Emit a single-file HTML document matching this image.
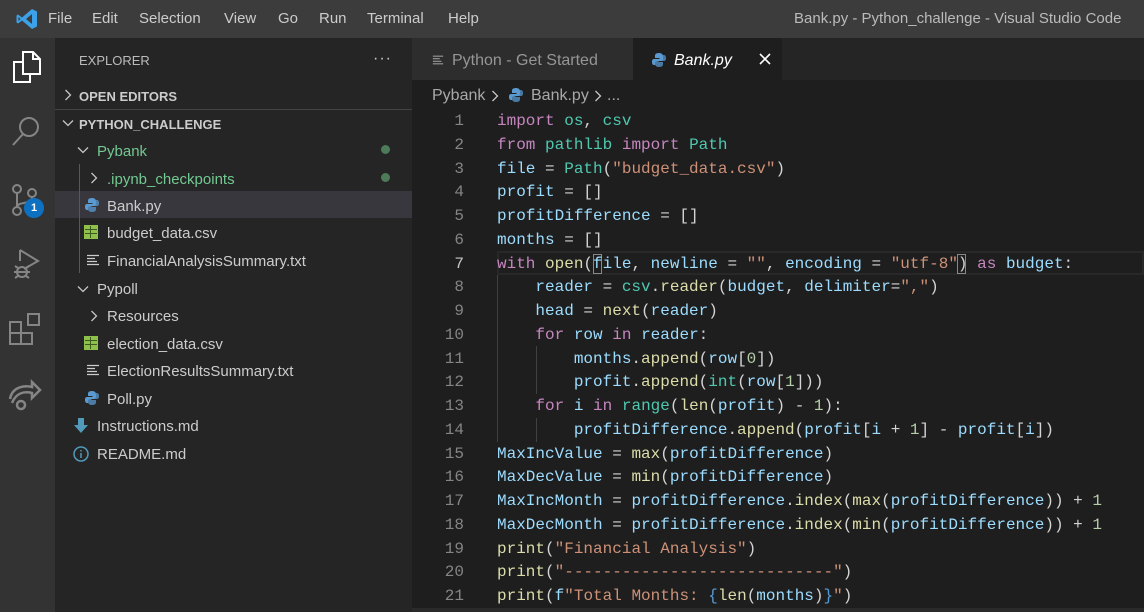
<!DOCTYPE html>
<html><head><meta charset="utf-8">
<style>
*{margin:0;padding:0;box-sizing:border-box}
body{width:1144px;height:612px;overflow:hidden;background:#1e1e1e;font-family:"Liberation Sans",sans-serif;position:relative}
.abs{position:absolute}
#title{left:0;top:0;width:1144px;height:38px;background:#3c3c3c}
.menu{top:10px;font-size:15px;color:#cccccc}
#act{left:0;top:38px;width:55px;height:574px;background:#333333}
#side{left:55px;top:38px;width:357px;height:574px;background:#252526}
.st{font-size:15px;color:#cccccc;white-space:nowrap}
.hdr{font-size:13px;font-weight:bold;color:#cccccc}
#tabs{left:412px;top:38px;width:732px;height:42px;background:#252526}
.code{font-family:"Liberation Mono",monospace;font-size:16px;white-space:pre;color:#d4d4d4}
.ln{font-family:"Liberation Mono",monospace;font-size:16px;color:#858585;width:52px;text-align:right;left:412px}
.k{color:#c586c0}.v{color:#9cdcfe}.f{color:#dcdcaa}.c{color:#4ec9b0}.s{color:#ce9178}.n{color:#b5cea8}
.csv{width:14px;height:14px;background:#8dc149;border:1px solid #8dc149;background-image:linear-gradient(90deg,transparent 5px,#3d5a1e 5px,#3d5a1e 6px,transparent 6px),linear-gradient(transparent 3px,#3d5a1e 3px,#3d5a1e 4px,transparent 4px,transparent 7px,#3d5a1e 7px,#3d5a1e 8px,transparent 8px)}
</style></head><body>
<svg width="0" height="0" style="position:absolute"><defs>
<symbol id="cr" viewBox="0 0 16 16"><path d="M5.5 3 L10.5 8 L5.5 13" fill="none" stroke="#c5c5c5" stroke-width="1.3"/></symbol>
<symbol id="cd" viewBox="0 0 16 16"><path d="M3 5.5 L8 10.5 L13 5.5" fill="none" stroke="#c5c5c5" stroke-width="1.3"/></symbol>
<symbol id="py" viewBox="0 0 14 14"><path d="M7 0 C3 0 3 2 3 3 V5 H7.5 V6 H2 C0 6 0 8 0 9 C0 11 1 12 2 12 H3 V10 C3 9 4 8 5 8 H9 C10 8 11 7 11 6 V3 C11 1 9 0 7 0Z" fill="#5a9ad0"/><path d="M7 14 C11 14 11 12 11 11 V9 H6.5 V8 H12 C14 8 14 6 14 5 C14 3 13 2 12 2 H11 V4 C11 5 10 6 9 6 H5 C4 6 3 7 3 8 V11 C3 13 5 14 7 14Z" fill="#5a9ad0" opacity=".75"/></symbol>
<symbol id="tx" viewBox="0 0 14 14"><path d="M1 2.5 H13 M1 5.5 H9 M1 8.5 H11 M1 11.5 H13" stroke="#cccccc" stroke-width="1.2"/></symbol>
</defs></svg>
<div id="title" class="abs"></div>
<svg class="abs" style="left:16px;top:8px" width="22" height="22" viewBox="0 0 22 22"><path d="M16 1 L21 3.5 V18.5 L16 21 L6 12.5 L2 15.5 L0.5 14.5 V7.5 L2 6.5 L6 9.5 Z M16 6 L10 11 L16 16 Z M2.5 9 V13 L4.5 11 Z" fill="#3ca1e8" fill-rule="evenodd"/></svg>
<div class="abs menu" style="left:48px">File</div>
<div class="abs menu" style="left:92px">Edit</div>
<div class="abs menu" style="left:139px">Selection</div>
<div class="abs menu" style="left:224px">View</div>
<div class="abs menu" style="left:278px">Go</div>
<div class="abs menu" style="left:319px">Run</div>
<div class="abs menu" style="left:367px">Terminal</div>
<div class="abs menu" style="left:448px">Help</div>
<div class="abs menu" style="left:794px;color:#bbbbbb">Bank.py - Python_challenge - Visual Studio Code</div>

<div id="act" class="abs"></div>
<svg class="abs" style="left:10px;top:50px" width="32" height="34" viewBox="0 0 32 34" fill="none" stroke="#ffffff" stroke-width="2"><path d="M13 2 H23 L30 9 V24 H13 Z"/><path d="M23 2 V9 H30"/><path d="M13 12 H4 V32 H20 V24"/></svg>
<svg class="abs" style="left:10px;top:115px" width="32" height="34" viewBox="0 0 32 34" fill="none" stroke="#858585" stroke-width="2"><circle cx="19" cy="12" r="9"/><path d="M13 19 L3 30"/></svg>
<svg class="abs" style="left:10px;top:183px" width="32" height="34" viewBox="0 0 32 34" fill="none" stroke="#858585" stroke-width="2"><circle cx="7" cy="6" r="4"/><circle cx="22" cy="10" r="4"/><circle cx="7" cy="28" r="4"/><path d="M7 10 V24 M22 14 C22 22 8 18 7 24"/></svg>
<div class="abs" style="left:24px;top:198px;width:20px;height:20px;border-radius:10px;background:#0e70c0;color:#fff;font-size:11px;font-weight:bold;text-align:center;line-height:20px">1</div>
<svg class="abs" style="left:8px;top:247px" width="34" height="34" viewBox="0 0 34 34" fill="none" stroke="#858585" stroke-width="2"><path d="M12 3 L30 14 L16 22"/><path d="M12 3 V14"/><ellipse cx="14" cy="25" rx="5" ry="5"/><path d="M6 25 H22 M7 19 L10 21 M21 19 L18 21 M7 31 L10 29 M21 31 L18 29"/></svg>
<svg class="abs" style="left:8px;top:312px" width="34" height="34" viewBox="0 0 34 34" fill="none" stroke="#858585" stroke-width="2"><rect x="2" y="10" width="11" height="11"/><rect x="2" y="21" width="11" height="11"/><rect x="13" y="21" width="11" height="11"/><rect x="20" y="2" width="11" height="11"/></svg>
<svg class="abs" style="left:8px;top:377px" width="34" height="34" viewBox="0 0 34 34" fill="none" stroke="#858585" stroke-width="2.5"><path d="M2 22 C4 10 16 8 24 10 V5 L32 13 L24 21 V16 C16 14 8 16 4 26"/><circle cx="13" cy="28" r="4"/></svg>

<div id="side" class="abs"></div>
<div class="abs" style="left:79px;top:53px;font-size:13px;color:#bbbbbb">EXPLORER</div>
<div class="abs" style="left:373px;top:50px;font-size:16px;color:#cccccc;letter-spacing:1px">···</div>
<svg class="abs" style="left:60px;top:87px" width="16" height="16"><use href="#cr"/></svg>
<div class="abs hdr" style="left:79px;top:89px">OPEN EDITORS</div>
<div class="abs" style="left:55px;top:109px;width:357px;height:1px;background:#444"></div>
<svg class="abs" style="left:60px;top:115px" width="16" height="16"><use href="#cd"/></svg>
<div class="abs hdr" style="left:79px;top:117px">PYTHON_CHALLENGE</div>
<div class="abs" style="left:55px;top:191px;width:357px;height:27px;background:#37373d"></div>
<div class="abs" style="left:79px;top:164px;width:1px;height:109px;background:#585858"></div>

<svg class="abs" style="left:75px;top:142px" width="16" height="16"><use href="#cd"/></svg>
<div class="abs st" style="left:97px;top:143px;color:#73c991">Pybank</div>
<div class="abs" style="left:381px;top:145px;width:9px;height:9px;border-radius:5px;background:#4d7a58"></div>
<svg class="abs" style="left:86px;top:170px" width="16" height="16"><use href="#cr"/></svg>
<div class="abs st" style="left:107px;top:171px;color:#73c991">.ipynb_checkpoints</div>
<div class="abs" style="left:381px;top:173px;width:9px;height:9px;border-radius:5px;background:#4d7a58"></div>

<svg class="abs" style="left:85px;top:198px" width="14" height="14"><use href="#py"/></svg>
<div class="abs st" style="left:107px;top:198px">Bank.py</div>
<div class="abs csv" style="left:84px;top:225px"></div>
<div class="abs st" style="left:107px;top:225px">budget_data.csv</div>
<svg class="abs" style="left:86px;top:253px" width="14" height="14"><use href="#tx"/></svg>
<div class="abs st" style="left:107px;top:253px">FinancialAnalysisSummary.txt</div>
<svg class="abs" style="left:75px;top:281px" width="16" height="16"><use href="#cd"/></svg>
<div class="abs st" style="left:97px;top:281px">Pypoll</div>
<svg class="abs" style="left:86px;top:308px" width="16" height="16"><use href="#cr"/></svg>
<div class="abs st" style="left:107px;top:308px">Resources</div>
<div class="abs csv" style="left:84px;top:336px"></div>
<div class="abs st" style="left:107px;top:336px">election_data.csv</div>
<svg class="abs" style="left:86px;top:363px" width="14" height="14"><use href="#tx"/></svg>
<div class="abs st" style="left:107px;top:363px">ElectionResultsSummary.txt</div>
<svg class="abs" style="left:85px;top:391px" width="14" height="14"><use href="#py"/></svg>
<div class="abs st" style="left:107px;top:391px">Poll.py</div>
<svg class="abs" style="left:74px;top:418px" width="14" height="16" viewBox="0 0 14 16"><path d="M4 0 H10 V7 H14 L7 15 L0 7 H4 Z" fill="#519aba"/></svg>
<div class="abs st" style="left:97px;top:418px">Instructions.md</div>
<svg class="abs" style="left:73px;top:446px" width="16" height="16" viewBox="0 0 16 16" fill="none" stroke="#519aba" stroke-width="1.5"><circle cx="8" cy="8" r="7"/><path d="M8 7 V12 M8 4 V5.5"/></svg>
<div class="abs st" style="left:97px;top:446px">README.md</div>

<div id="tabs" class="abs"></div>
<div class="abs" style="left:412px;top:38px;width:221px;height:42px;background:#2d2d2d"></div>
<svg class="abs" style="left:432px;top:54px" width="12" height="12" viewBox="0 0 14 14"><path d="M1 2.5 H13 M1 5.5 H9 M1 8.5 H11 M1 11.5 H13" stroke="#999" stroke-width="1.3"/></svg>
<div class="abs" style="left:452px;top:52px;font-size:16px;color:#969696">Python - Get Started</div>
<div class="abs" style="left:633px;top:38px;width:149px;height:42px;background:#1e1e1e"></div>
<svg class="abs" style="left:652px;top:53px" width="14" height="14"><use href="#py"/></svg>
<div class="abs" style="left:674px;top:52px;font-size:16px;color:#ffffff;font-style:italic">Bank.py</div>
<svg class="abs" style="left:758px;top:52px" width="14" height="14" viewBox="0 0 14 14"><path d="M2 2 L12 12 M12 2 L2 12" stroke="#fff" stroke-width="1.6"/></svg>

<div class="abs" style="left:432px;top:87px;font-size:16px;color:#a9a9a9">Pybank</div>
<svg class="abs" style="left:487px;top:88px" width="16" height="16"><use href="#cr"/></svg>
<svg class="abs" style="left:509px;top:88px" width="14" height="14"><use href="#py"/></svg>
<div class="abs" style="left:531px;top:87px;font-size:16px;color:#a9a9a9">Bank.py</div>
<svg class="abs" style="left:590px;top:88px" width="16" height="16"><use href="#cr"/></svg>
<div class="abs" style="left:607px;top:87px;font-size:16px;color:#a9a9a9">...</div>

<div class="abs" style="left:497px;top:251px;width:647px;height:24px;border:2px solid #282828"></div>
<div class="abs" style="left:593px;top:254px;width:9px;height:20px;border:1px solid #888"></div>
<div class="abs" style="left:957px;top:254px;width:9px;height:20px;border:1px solid #888"></div>
<div class="abs" style="left:497px;top:275px;width:1px;height:167px;background:#404040"></div>
<div class="abs" style="left:536px;top:346px;width:1px;height:48px;background:#404040"></div>
<div class="abs" style="left:536px;top:418px;width:1px;height:24px;background:#404040"></div>
<div class="abs" style="left:412px;top:608px;width:732px;height:4px;background:#2a2a2a"></div>

<div class="abs ln" style="top:110px;line-height:23.75px">1<br>2<br>3<br>4<br>5<br>6<br><span style="color:#c6c6c6">7</span><br>8<br>9<br>10<br>11<br>12<br>13<br>14<br>15<br>16<br>17<br>18<br>19<br>20<br>21</div>
<div class="abs code" style="left:497px;top:110px;line-height:23.75px"><span class="k">import</span> <span class="c">os</span>, <span class="c">csv</span>
<span class="k">from</span> <span class="c">pathlib</span> <span class="k">import</span> <span class="c">Path</span>
<span class="v">file</span> = <span class="c">Path</span>(<span class="s">"budget_data.csv"</span>)
<span class="v">profit</span> = []
<span class="v">profitDifference</span> = []
<span class="v">months</span> = []
<span class="k">with</span> <span class="f">open</span>(<span class="v">file</span>, <span class="v">newline</span> = <span class="s">""</span>, <span class="v">encoding</span> = <span class="s">"utf-8"</span>) <span class="k">as</span> <span class="v">budget</span>:
    <span class="v">reader</span> = <span class="c">csv</span>.<span class="f">reader</span>(<span class="v">budget</span>, <span class="v">delimiter</span>=<span class="s">","</span>)
    <span class="v">head</span> = <span class="f">next</span>(<span class="v">reader</span>)
    <span class="k">for</span> <span class="v">row</span> <span class="k">in</span> <span class="v">reader</span>:
        <span class="v">months</span>.<span class="f">append</span>(<span class="v">row</span>[<span class="n">0</span>])
        <span class="v">profit</span>.<span class="f">append</span>(<span class="c">int</span>(<span class="v">row</span>[<span class="n">1</span>]))
    <span class="k">for</span> <span class="v">i</span> <span class="k">in</span> <span class="c">range</span>(<span class="f">len</span>(<span class="v">profit</span>) - <span class="n">1</span>):
        <span class="v">profitDifference</span>.<span class="f">append</span>(<span class="v">profit</span>[<span class="v">i</span> + <span class="n">1</span>] - <span class="v">profit</span>[<span class="v">i</span>])
<span class="v">MaxIncValue</span> = <span class="f">max</span>(<span class="v">profitDifference</span>)
<span class="v">MaxDecValue</span> = <span class="f">min</span>(<span class="v">profitDifference</span>)
<span class="v">MaxIncMonth</span> = <span class="v">profitDifference</span>.<span class="f">index</span>(<span class="f">max</span>(<span class="v">profitDifference</span>)) + <span class="n">1</span>
<span class="v">MaxDecMonth</span> = <span class="v">profitDifference</span>.<span class="f">index</span>(<span class="f">min</span>(<span class="v">profitDifference</span>)) + <span class="n">1</span>
<span class="f">print</span>(<span class="s">"Financial Analysis"</span>)
<span class="f">print</span>(<span class="s">"----------------------------"</span>)
<span class="f">print</span>(<span class="v">f</span><span class="s">"Total Months: </span><span style="color:#569cd6">{</span><span class="f">len</span>(<span class="v">months</span>)<span style="color:#569cd6">}</span><span class="s">"</span>)</div>
</body></html>
